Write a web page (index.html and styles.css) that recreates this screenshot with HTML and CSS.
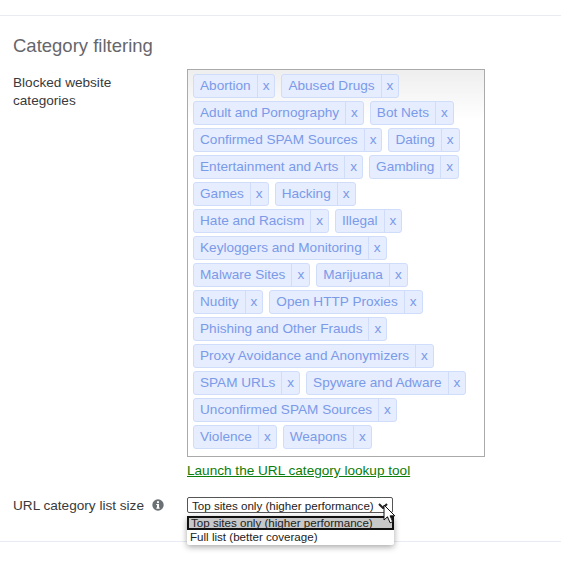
FILE: index.html
```html
<!DOCTYPE html>
<html lang="en">
<head>
  <meta charset="UTF-8">
  <title>Category filtering</title>
  <link rel="stylesheet" href="styles.css">
</head>
<body>
  <div class="section">
    <h2>Category filtering</h2>
    <div class="form-row">
      <label class="row-label blocked-label">Blocked website categories</label>
      <div class="row-field">
        <ul class="chips">
          <li class="chip"><span class="chip-text">Abortion</span><span class="chip-x">x</span></li>
          <li class="chip"><span class="chip-text">Abused Drugs</span><span class="chip-x">x</span></li>
          <li class="chip"><span class="chip-text">Adult and Pornography</span><span class="chip-x">x</span></li>
          <li class="chip"><span class="chip-text">Bot Nets</span><span class="chip-x">x</span></li>
          <li class="chip"><span class="chip-text">Confirmed SPAM Sources</span><span class="chip-x">x</span></li>
          <li class="chip"><span class="chip-text">Dating</span><span class="chip-x">x</span></li>
          <li class="chip"><span class="chip-text">Entertainment and Arts</span><span class="chip-x">x</span></li>
          <li class="chip"><span class="chip-text">Gambling</span><span class="chip-x">x</span></li>
          <li class="chip"><span class="chip-text">Games</span><span class="chip-x">x</span></li>
          <li class="chip"><span class="chip-text">Hacking</span><span class="chip-x">x</span></li>
          <li class="chip"><span class="chip-text">Hate and Racism</span><span class="chip-x">x</span></li>
          <li class="chip"><span class="chip-text">Illegal</span><span class="chip-x">x</span></li>
          <li class="chip"><span class="chip-text">Keyloggers and Monitoring</span><span class="chip-x">x</span></li>
          <li class="chip"><span class="chip-text">Malware Sites</span><span class="chip-x">x</span></li>
          <li class="chip"><span class="chip-text">Marijuana</span><span class="chip-x">x</span></li>
          <li class="chip"><span class="chip-text">Nudity</span><span class="chip-x">x</span></li>
          <li class="chip"><span class="chip-text">Open HTTP Proxies</span><span class="chip-x">x</span></li>
          <li class="chip"><span class="chip-text">Phishing and Other Frauds</span><span class="chip-x">x</span></li>
          <li class="chip"><span class="chip-text">Proxy Avoidance and Anonymizers</span><span class="chip-x">x</span></li>
          <li class="chip"><span class="chip-text">SPAM URLs</span><span class="chip-x">x</span></li>
          <li class="chip"><span class="chip-text">Spyware and Adware</span><span class="chip-x">x</span></li>
          <li class="chip"><span class="chip-text">Unconfirmed SPAM Sources</span><span class="chip-x">x</span></li>
          <li class="chip"><span class="chip-text">Violence</span><span class="chip-x">x</span></li>
          <li class="chip"><span class="chip-text">Weapons</span><span class="chip-x">x</span></li>
        </ul>
        <a class="lookup-link" href="#">Launch the URL category lookup tool</a>
      </div>
    </div>
    <div class="form-row size-row">
      <label class="row-label">URL category list size
        <svg class="info-icon" viewBox="0 0 12 12" width="12" height="12">
          <circle cx="6" cy="6" r="5.7" fill="#6b7075"/>
          <rect x="5" y="5" width="2" height="4.4" fill="#fff"/>
          <rect x="4.2" y="8.6" width="3.6" height="1" fill="#fff"/>
          <rect x="4.2" y="5" width="1.6" height="1" fill="#fff"/>
          <circle cx="6" cy="3.2" r="1.1" fill="#fff"/>
        </svg>
      </label>
      <div class="row-field">
        <div class="select">
          <span>Top sites only (higher performance)</span>
          <svg class="select-arrow" viewBox="0 0 10 6" width="10" height="6">
            <path d="M1 1l4 4 4-4" fill="none" stroke="#222" stroke-width="2"/>
          </svg>
          <ul class="select-menu">
            <li class="option option-active">Top sites only (higher performance)</li>
            <li class="option">Full list (better coverage)</li>
          </ul>
          <svg class="cursor" viewBox="0 0 13 20" width="13" height="20">
            <path d="M1 1v15l3.5-3.2 2.6 6 2.6-1.1-2.6-5.9h4.7z" fill="#fff" stroke="#111" stroke-width="1"/>
          </svg>
        </div>
      </div>
    </div>
  </div>
</body>
</html>
```

FILE: styles.css
```css
* {
  margin: 0;
  padding: 0;
  box-sizing: border-box;
}

body {
  font-family: "Liberation Sans", Arial, sans-serif;
  font-size: 13.6px;
  color: #39393b;
  background: #fff;
  height: 562px;
  overflow: hidden;
}

.section {
  margin-top: 15px;
  height: 527px;
  padding: 20px 13px 0;
  border-top: 1px solid #e8ebf1;
  border-bottom: 1px solid #e8ebf1;
}

h2 {
  font-size: 18.5px;
  font-weight: 400;
  line-height: 20px;
  color: #66666a;
  margin-bottom: 13px;
}

.form-row {
  display: flex;
}

.row-label {
  flex: none;
  width: 174px;
  line-height: 18px;
}

.blocked-label {
  padding: 5px 60px 0 0;
}

.chips {
  list-style: none;
  width: 298px;
  height: 388px;
  padding: 4px 5px;
  display: flex;
  flex-wrap: wrap;
  align-content: flex-start;
  gap: 3px 6px;
  border: 1px solid #aaa;
  background: linear-gradient(to bottom, #eee, #fff 50px);
}

.chip {
  display: flex;
  height: 24px;
  line-height: 22px;
  color: #7b9ae8;
  background: #e5edff;
  border: 1px solid #cfdcfa;
  border-radius: 3px;
}

.chip-text {
  padding: 0 6px;
}

.chip-x {
  padding: 0 5px;
  border-left: 1px solid #cfdcfa;
}

.lookup-link {
  display: inline-block;
  margin-top: 5px;
  line-height: 18px;
  color: #0a7d0a;
}

.size-row {
  margin-top: 17px;
}

.info-icon {
  margin-left: 4px;
  vertical-align: -1px;
}

.select {
  position: relative;
  width: 206px;
  height: 16px;
  padding-left: 4px;
  display: flex;
  align-items: center;
  font-size: 11.6px;
  line-height: 13px;
  color: #222;
  border: 1px solid #555;
  border-radius: 2px;
}

.select-arrow {
  position: absolute;
  right: 4px;
  top: 5px;
}

.select-menu {
  position: absolute;
  left: -1px;
  top: 18px;
  width: 207px;
  list-style: none;
  background: #fff;
  border-radius: 2px;
  box-shadow: 0 2px 6px rgba(0, 0, 0, 0.35);
}

.option {
  height: 15px;
  line-height: 13px;
  padding-left: 3px;
}

.option-active {
  height: 14px;
  background: #c8c8c8;
  border: 2px solid #111;
  padding-left: 2px;
  line-height: 10px;
}

.cursor {
  position: absolute;
  left: 195px;
  top: 6px;
}
```
